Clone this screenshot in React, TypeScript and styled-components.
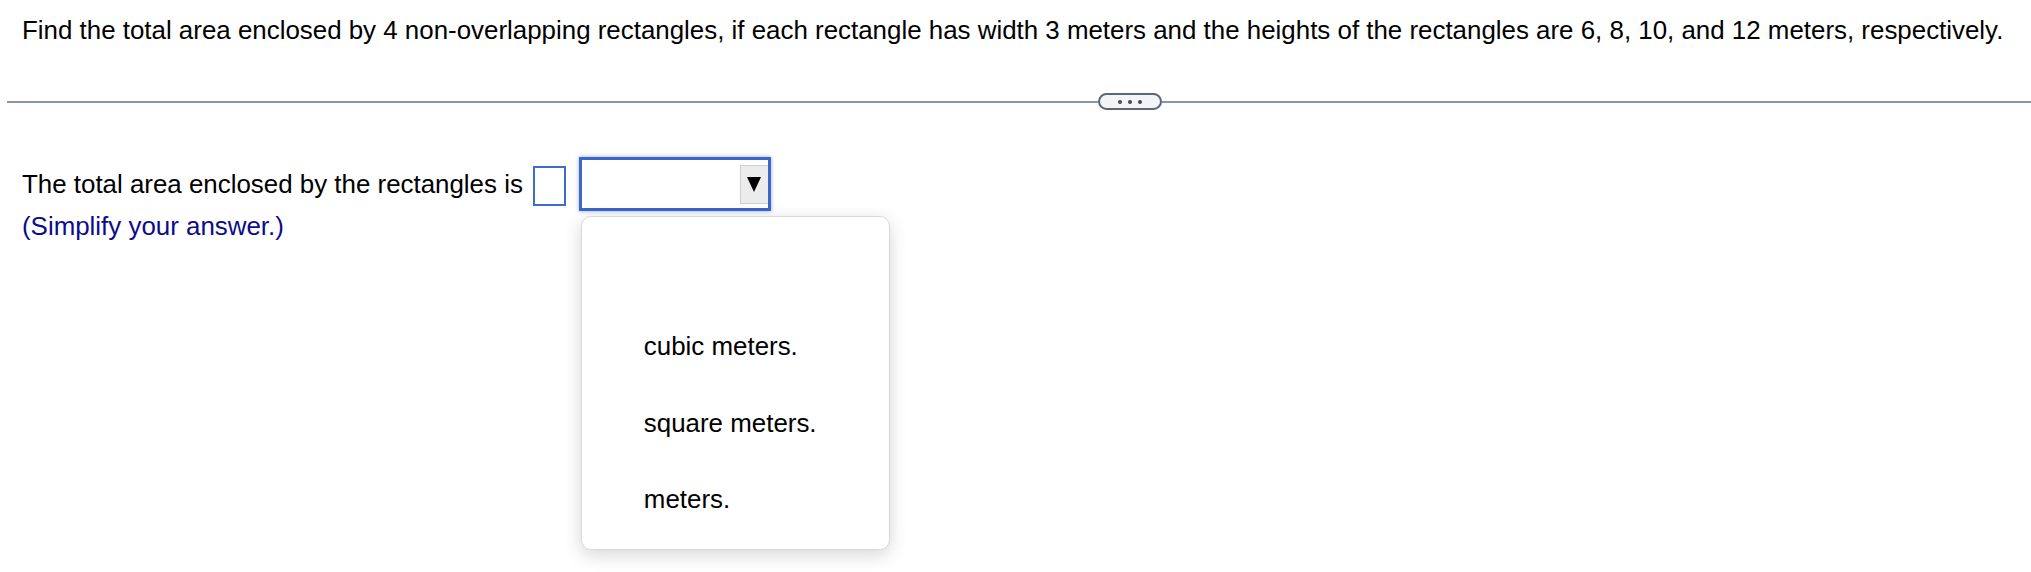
import styled, { createGlobalStyle } from 'styled-components';

const GlobalStyle = createGlobalStyle`
  html, body {
    margin: 0;
    padding: 0;
    background: #ffffff;
  }

  body {
    font-family: "Liberation Sans", Arial, sans-serif;
    color: #000000;
  }
`

const Page = styled.div`
  width: 2031px;
  height: 572px;
  overflow: hidden;
  padding-top: 15px;
  box-sizing: border-box;
`

const Question = styled.p`
  margin: 0 0 48px 22px;
  font-size: 25.9px;
  line-height: 30px;
  white-space: nowrap;
`

const Divider = styled.div`
  display: flex;
  align-items: center;
  height: 17px;
  padding-left: 7px;
`

const Rule = styled.div<{ $grow?: boolean }>`
  height: 2px;
  background-color: #8a94a3;
  width: ${(props) => (props.$grow ? 'auto' : '1091px')};
  flex: ${(props) => (props.$grow ? '1' : 'none')};
`

const MoreBtn = styled.button`
  width: 64px;
  height: 17px;
  padding: 0;
  border: 2px solid #5b6676;
  border-radius: 9px;
  background-color: #f3f4f6;
  display: flex;
  align-items: center;
  justify-content: center;
  gap: 6px;
  box-sizing: border-box;
`

const Dot = styled.span`
  width: 4px;
  height: 4px;
  border-radius: 50%;
  background-color: #454a52;
`

const Answer = styled.div`
  margin: 47px 0 0 22px;
`

const AnswerRow = styled.div`
  display: flex;
  align-items: center;
  height: 54px;
`

const Prompt = styled.span`
  font-size: 25.9px;
  line-height: 30px;
`

const BlankBox = styled.span`
  width: 33px;
  height: 40px;
  margin-left: 10px;
  margin-top: 3px;
  border: 2px solid #3d6ccf;
  box-sizing: border-box;
`

const SelectWrap = styled.div`
  position: relative;
  margin-left: 13px;
`

const SelectBox = styled.div`
  width: 192px;
  height: 54px;
  border: 3px solid #3b67c9;
  box-shadow: 0 0 4px rgba(59, 103, 201, 0.55);
  background-color: #ffffff;
  box-sizing: border-box;
  display: flex;
  justify-content: flex-end;
  align-items: center;
`

const ArrowBtn = styled.div`
  width: 28px;
  height: 39px;
  margin-top: 1px;
  background-color: #ececec;
  border: 1px solid #cfcfcf;
  border-right: none;
  box-sizing: border-box;
  display: flex;
  align-items: center;
  justify-content: center;
`

const Triangle = styled.span`
  width: 0;
  height: 0;
  border-left: 7px solid transparent;
  border-right: 7px solid transparent;
  border-top: 15px solid #000000;
`

const Hint = styled.div`
  font-size: 25.9px;
  line-height: 30px;
  color: #0c0c8c;
`

const Menu = styled.ul`
  position: absolute;
  top: calc(100% + 5px);
  left: 2px;
  width: 309px;
  margin: 0;
  padding: 15px 0 11px;
  list-style: none;
  background-color: #ffffff;
  border: 1px solid #d9d9d9;
  border-radius: 10px;
  box-shadow: 0 5px 18px rgba(0, 0, 0, 0.16);
  box-sizing: border-box;
`

const Option = styled.li`
  height: 76.5px;
  padding-left: 62px;
  display: flex;
  align-items: center;
  font-size: 25.9px;
  color: #000000;
`

const units = ['', 'cubic meters.', 'square meters.', 'meters.'];

export default function App() {
  return (
    <>
      <GlobalStyle />
      <Page>
        <Question>
          Find the total area enclosed by 4 non-overlapping rectangles, if each rectangle has width 3 meters and the
          heights of the rectangles are 6, 8, 10, and 12 meters, respectively.
        </Question>
        <Divider>
          <Rule />
          <MoreBtn aria-label="More">
            <Dot />
            <Dot />
            <Dot />
          </MoreBtn>
          <Rule $grow />
        </Divider>
        <Answer>
          <AnswerRow>
            <Prompt>The total area enclosed by the rectangles is</Prompt>
            <BlankBox />
            <SelectWrap>
              <SelectBox>
                <ArrowBtn>
                  <Triangle />
                </ArrowBtn>
              </SelectBox>
              <Menu>
                {units.map((unit, i) => (
                  <Option key={i}>{unit}</Option>
                ))}
              </Menu>
            </SelectWrap>
          </AnswerRow>
          <Hint>(Simplify your answer.)</Hint>
        </Answer>
      </Page>
    </>
  );
}
